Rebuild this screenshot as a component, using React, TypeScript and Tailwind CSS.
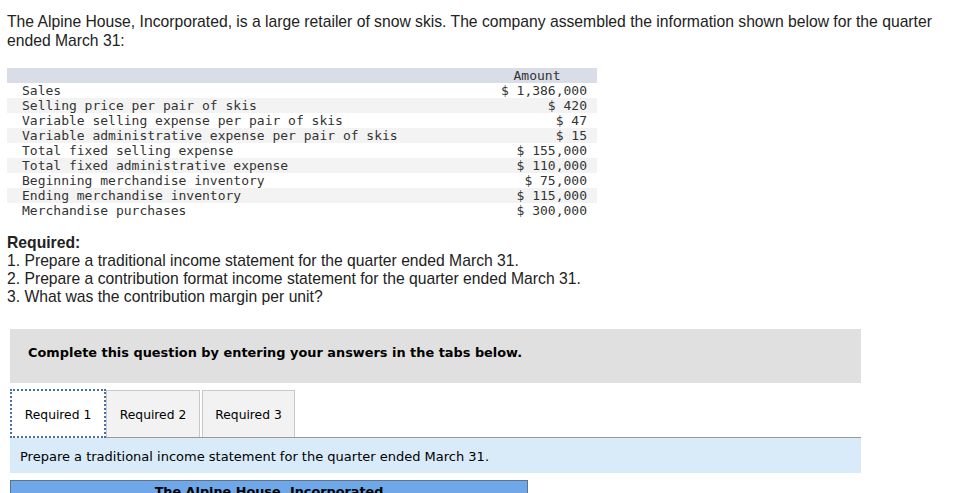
import React from "react";

const rows: [string, string][] = [
  ["Sales", "$ 1,386,000"],
  ["Selling price per pair of skis", "$ 420"],
  ["Variable selling expense per pair of skis", "$ 47"],
  ["Variable administrative expense per pair of skis", "$ 15"],
  ["Total fixed selling expense", "$ 155,000"],
  ["Total fixed administrative expense", "$ 110,000"],
  ["Beginning merchandise inventory", "$ 75,000"],
  ["Ending merchandise inventory", "$ 115,000"],
  ["Merchandise purchases", "$ 300,000"],
];

export default function App() {
  return (
    <div className="w-[964px] h-[493px] overflow-hidden bg-white text-[#222]">
      <div
        className="pl-[7px] w-[950px] pt-[12px] text-[15.7px] leading-[19px]"
        style={{ fontFamily: '"Liberation Sans", Arial, sans-serif' }}
      >
        The Alpine House, Incorporated, is a large retailer of snow skis. The company assembled the information shown below for the quarter ended March 31:
      </div>

      <table
        className="ml-[7px] mt-[18px] w-[590px] border-collapse text-[13px] leading-[15px] text-[#333]"
        style={{ fontFamily: '"DejaVu Sans Mono", monospace' }}
      >
        <thead>
          <tr className="bg-[#d8dde8] h-[15px]">
            <th className="text-left font-normal pl-[15px]"></th>
            <th className="font-normal w-[120px] text-center">Amount</th>
          </tr>
        </thead>
        <tbody>
          {rows.map(([label, value], i) => (
            <tr key={label} className={i % 2 === 1 ? "bg-[#f3f3f3] h-[15px]" : "bg-white h-[15px]"}>
              <td className="pl-[15px] text-left whitespace-pre">{label}</td>
              <td className="pr-[10px] text-right whitespace-pre">{value}</td>
            </tr>
          ))}
        </tbody>
      </table>

      <div
        className="pl-[7px] mt-[16px] text-[15.7px] leading-[18px]"
        style={{ fontFamily: '"Liberation Sans", Arial, sans-serif' }}
      >
        <div className="font-bold">Required:</div>
        <div>1. Prepare a traditional income statement for the quarter ended March 31.</div>
        <div>2. Prepare a contribution format income statement for the quarter ended March 31.</div>
        <div>3. What was the contribution margin per unit?</div>
      </div>

      <div
        className="ml-[10px] w-[851px]"
        style={{ fontFamily: '"DejaVu Sans", Verdana, sans-serif' }}
      >
        <div className="mt-[23px] h-[54px] bg-[#e0e0e0] pl-[18px] pt-[14px] text-[12.9px] font-bold text-black">
          Complete this question by entering your answers in the tabs below.
        </div>

        <div className="mt-[6px] flex items-end border-b border-[#9a9a9a]">
          <div className="h-[49px] w-[96px] mb-[-1px] pt-[3px] flex items-center justify-center bg-white border-2 border-dotted border-[#4a6fa5] text-[12.3px] text-black">
            Required 1
          </div>
          <div className="h-[47px] w-[94px] pt-[3px] flex items-center justify-center bg-[#f2f2f2] border border-b-0 border-[#c8c8c8] text-[12.3px] text-black">
            Required 2
          </div>
          <div className="ml-[2px] h-[47px] w-[93px] pt-[3px] flex items-center justify-center bg-[#f2f2f2] border border-b-0 border-[#c8c8c8] text-[12.3px] text-black">
            Required 3
          </div>
        </div>

        <div className="h-[35px] bg-[#d9ebf9] pl-[10px] pt-[2px] flex items-center text-[13px] text-black">
          Prepare a traditional income statement for the quarter ended March 31.
        </div>

        <div className="mt-[7px] w-[518px] h-[30px] bg-[#6fa8e8] border border-[#5b7290] text-center text-[12.8px] font-bold text-black pt-[1px]">
          The Alpine House, Incorporated
        </div>
      </div>
    </div>
  );
}
